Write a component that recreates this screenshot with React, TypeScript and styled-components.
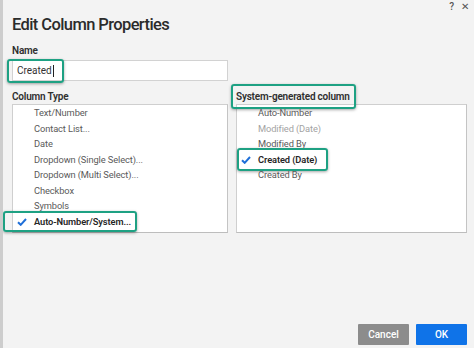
import React from "react";
import styled, { createGlobalStyle } from "styled-components";

const Global = createGlobalStyle`
  html, body { margin: 0; padding: 0; background: #f3f3f3; }
  body { font-family: Roboto, "Liberation Sans", Arial, sans-serif; }
`;

const Dialog = styled.div`
  position: relative;
  box-sizing: border-box;
  width: 474px;
  height: 348px;
  background: #f3f3f3;
  border-left: 3px solid #cdcdcd;
  padding: 0 7px 3px 9px;
  display: flex;
  flex-direction: column;
  color: #333;
  overflow: hidden;
`;

const IconBar = styled.div`
  display: flex;
  justify-content: flex-end;
  gap: 7px;
  height: 10px;
  padding-top: 2px;
  margin-right: -2px;
  font-size: 10px;
  line-height: 10px;
  color: #555;
`;

const IconGlyph = styled.span`
  font-weight: 500;
`;

const Title = styled.h1`
  margin: 2px 0 0 0;
  font-size: 16.5px;
  line-height: 22px;
  font-weight: 500;
  letter-spacing: -0.6px;
  color: #2b2b2b;
`;

const Label = styled.div`
  font-size: 10px;
  font-weight: 600;
  line-height: 14px;
  color: #2f2f2f;
  letter-spacing: -0.2px;
`;

const NameLabel = styled(Label)`
  margin-top: 8px;
`;

const Input = styled.div`
  box-sizing: border-box;
  width: 216px;
  height: 21px;
  margin-top: 2px;
  background: #fff;
  border: 1px solid #d2d2d2;
  display: flex;
  align-items: center;
  padding-left: 4px;
  font-size: 10px;
  color: #333;
`;

const Caret = styled.span`
  display: inline-block;
  width: 1px;
  height: 12px;
  background: #222;
  margin-left: 1px;
`;

const Callout = styled.span<{ $l: number; $t: number; $r: number; $b: number }>`
  position: relative;
  display: inline-flex;
  align-items: center;
  &::after {
    content: "";
    position: absolute;
    left: ${(p) => p.$l}px;
    top: ${(p) => p.$t}px;
    right: ${(p) => p.$r}px;
    bottom: ${(p) => p.$b}px;
    border: 2px solid #1ea183;
    border-radius: 3px;
    box-shadow: 0 1px 3px rgba(0, 0, 0, 0.35);
    pointer-events: none;
  }
`;

const Columns = styled.div`
  display: grid;
  grid-template-columns: 216px 231px;
  column-gap: 8px;
  margin-top: 9px;
`;

const Column = styled.div`
  display: flex;
  flex-direction: column;
`;

const ColLabel = styled(Label)`
  height: 14px;
  display: flex;
  align-items: center;
`;

const List = styled.div`
  box-sizing: border-box;
  height: 129px;
  background: #fff;
  border: 1px solid #cfcfcf;
  border-bottom-color: #bdbdbd;
  border-right-color: #c4c4c4;
  display: flex;
  flex-direction: column;
`;

const Item = styled.div<{ $selected?: boolean; $muted?: boolean }>`
  position: relative;
  height: 15.5px;
  display: flex;
  align-items: center;
  padding-left: 21px;
  font-size: 9.3px;
  letter-spacing: -0.1px;
  white-space: nowrap;
  font-weight: ${(p) => (p.$selected ? 600 : 400)};
  color: ${(p) => (p.$selected ? "#262626" : p.$muted ? "#a3a3a3" : "#5a5a5a")};
`;

const Check = styled.svg`
  position: absolute;
  left: 4px;
  top: 4px;
`;

const Spacer = styled.div`
  flex: 1;
`;

const Footer = styled.div`
  display: flex;
  justify-content: flex-end;
  gap: 7px;
`;

const Button = styled.button<{ $primary?: boolean }>`
  width: 51px;
  height: 21px;
  border: none;
  border-radius: 1px;
  font-family: Roboto, "Liberation Sans", Arial, sans-serif;
  font-size: 10px;
  font-weight: 500;
  color: #fff;
  background: ${(p) => (p.$primary ? "#0f73e8" : "#8c8c8c")};
  padding: 0;
`;

const CheckMark = () => (
  <Check width="10" height="8" viewBox="0 0 10 8">
    <polyline points="1,4.2 3.7,6.8 9,1" fill="none" stroke="#1f6fd8" strokeWidth="2" />
  </Check>
);

const columnTypes = [
  "Text/Number",
  "Contact List...",
  "Date",
  "Dropdown (Single Select)...",
  "Dropdown (Multi Select)...",
  "Checkbox",
  "Symbols",
];

export default function App() {
  return (
    <>
      <Global />
      <Dialog>
        <IconBar>
          <IconGlyph>?</IconGlyph>
          <IconGlyph>✕</IconGlyph>
        </IconBar>
        <Title>Edit Column Properties</Title>
        <NameLabel>Name</NameLabel>
        <Input>
          <Callout $l={-10} $t={-6} $r={-10} $b={-6}>
            Created
            <Caret />
          </Callout>
        </Input>
        <Columns>
          <Column>
            <ColLabel>Column Type</ColLabel>
            <List>
              {columnTypes.map((t) => (
                <Item key={t}>{t}</Item>
              ))}
              <Item $selected>
                <Callout $l={-31} $t={-5} $r={-6} $b={-5}>
                  Auto-Number/System...
                </Callout>
                <CheckMark />
              </Item>
            </List>
          </Column>
          <Column>
            <ColLabel>
              <Callout $l={-5} $t={-6} $r={-6} $b={-5}>
                System-generated column
              </Callout>
            </ColLabel>
            <List>
              <Item>Auto-Number</Item>
              <Item $muted>Modified (Date)</Item>
              <Item>Modified By</Item>
              <Item $selected>
                <Callout $l={-21} $t={-6} $r={-11} $b={-6}>
                  Created (Date)
                </Callout>
                <CheckMark />
              </Item>
              <Item>Created By</Item>
            </List>
          </Column>
        </Columns>
        <Spacer />
        <Footer>
          <Button>Cancel</Button>
          <Button $primary>OK</Button>
        </Footer>
      </Dialog>
    </>
  );
}
